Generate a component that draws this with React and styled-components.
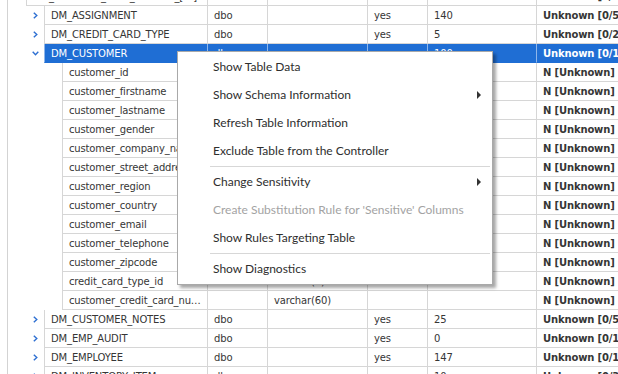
import React from "react";
import styled, { createGlobalStyle, css } from "styled-components";

const Global = createGlobalStyle`
  html, body { margin: 0; padding: 0; background: #fff; overflow: hidden; }
  #root { width: 618px; height: 374px; overflow: hidden; }
`;

const Page = styled.div`
  position: relative;
  width: 618px;
  height: 374px;
  overflow: hidden;
  background: #fff;
`;

const Grid = styled.div`
  margin-top: -13px;
  margin-left: 7px;
  border-left: 1px solid #d3d3d3;
  width: 720px;
  font-family: "DejaVu Sans", Tahoma, sans-serif;
  font-size: 10px;
  letter-spacing: -0.15px;
  color: #363636;
`;

const Row = styled.div`
  display: flex;
  height: 19px;
`;

const Expander = styled.div`
  flex: none;
  width: ${(p) => p.$w}px;
  display: flex;
  align-items: center;
  justify-content: flex-end;
  padding-right: ${(p) => (p.$down ? 5 : 6)}px;
  box-sizing: border-box;
`;

const Cell = styled.div`
  flex: none;
  width: ${(p) => p.$w}px;
  box-sizing: border-box;
  border-left: 1px solid #d6d6d6;
  border-bottom: 1px solid #d6d6d6;
  padding-left: 6px;
  padding-right: 2px;
  line-height: 19px;
  white-space: nowrap;
  overflow: hidden;
  text-overflow: ${(p) => (p.$ellipsis ? "ellipsis" : "clip")};
  font-weight: ${(p) => (p.$bold ? 700 : 400)};
  ${(p) =>
    p.$sel &&
    css`
      background: #1f6ed4;
      color: #fff;
      border-left-color: #8fb6ea;
      border-bottom-color: #1f6ed4;
    `}
`;

const Menu = styled.div`
  position: absolute;
  left: 177px;
  top: 51px;
  width: 316px;
  box-sizing: border-box;
  background: #fff;
  border: 1px solid #a9a9a9;
  box-shadow: 3px 3px 3px rgba(0, 0, 0, 0.35);
  padding: 1px 0 1px;
  font-family: Lato, "Segoe UI", sans-serif;
  font-size: 12px;
  color: #2e2e2e;
`;

const Item = styled.div`
  position: relative;
  height: 28px;
  line-height: 28px;
  padding-left: 35px;
  color: ${(p) => (p.$disabled ? "#a3a3a3" : "#2e2e2e")};
`;

const Arrow = styled.span`
  position: absolute;
  right: 11px;
  top: 10px;
  width: 0;
  height: 0;
  border-top: 4px solid transparent;
  border-bottom: 4px solid transparent;
  border-left: 4px solid #333;
`;

const Sep = styled.div`
  height: 1px;
  background: #d7d7d7;
  margin: 1px 2px 1px 32px;
`;

const Chevron = ({ down }) =>
  down ? (
    <svg width="7" height="5" viewBox="0 0 7 5">
      <polyline points="0.7,0.8 3.5,3.8 6.3,0.8" fill="none" stroke="#2d6fd2" strokeWidth="1.4" />
    </svg>
  ) : (
    <svg width="5" height="7" viewBox="0 0 5 7">
      <polyline points="0.8,0.7 3.8,3.5 0.8,6.3" fill="none" stroke="#2d6fd2" strokeWidth="1.4" />
    </svg>
  );

const COLS = [60, 100, 60, 109, 220];

const TableRow = ({ name, schema, yes, count, status, sel, down }) => (
  <Row>
    <Expander $w={36} $down={down}>
      <Chevron down={down} />
    </Expander>
    <Cell $w={163} $sel={sel}>{name}</Cell>
    <Cell $w={COLS[0]} $sel={sel}>{schema}</Cell>
    <Cell $w={COLS[1]} $sel={sel}></Cell>
    <Cell $w={COLS[2]} $sel={sel}>{yes}</Cell>
    <Cell $w={COLS[3]} $sel={sel}>{count}</Cell>
    <Cell $w={COLS[4]} $sel={sel} $bold>{status}</Cell>
  </Row>
);

const ColumnRow = ({ name, type }) => (
  <Row>
    <Expander $w={54} />
    <Cell $w={145} $ellipsis>{name}</Cell>
    <Cell $w={COLS[0]}></Cell>
    <Cell $w={COLS[1]}>{type}</Cell>
    <Cell $w={COLS[2]}></Cell>
    <Cell $w={COLS[3]}></Cell>
    <Cell $w={COLS[4]} $bold>N [Unknown]</Cell>
  </Row>
);

const columns = [
  ["customer_id", "int"],
  ["customer_firstname", "varchar(40)"],
  ["customer_lastname", "varchar(40)"],
  ["customer_gender", "char(1)"],
  ["customer_company_name", "varchar(60)"],
  ["customer_street_address", "varchar(60)"],
  ["customer_region", "varchar(40)"],
  ["customer_country", "varchar(40)"],
  ["customer_email", "varchar(60)"],
  ["customer_telephone", "varchar(20)"],
  ["customer_zipcode", "varchar(10)"],
  ["credit_card_type_id", "varchar(5)"],
  ["customer_credit_card_number", "varchar(60)"],
];

export default function App() {
  return (
    <Page>
      <Global />
      <Grid>
        <Row>
          <Expander $w={18} />
          <Cell $w={181}>DM_ADDRESS_TYPE_LOOKUP_[ID]</Cell>
          <Cell $w={COLS[0]}></Cell>
          <Cell $w={COLS[1]}></Cell>
          <Cell $w={COLS[2]}></Cell>
          <Cell $w={COLS[3]}></Cell>
          <Cell $w={COLS[4]} $bold>Unknown [0/4]</Cell>
        </Row>
        <TableRow name="DM_ASSIGNMENT" schema="dbo" yes="yes" count="140" status="Unknown [0/5]" />
        <TableRow name="DM_CREDIT_CARD_TYPE" schema="dbo" yes="yes" count="5" status="Unknown [0/2]" />
        <TableRow name="DM_CUSTOMER" schema="dbo" yes="yes" count="100" status="Unknown [0/13]" sel down />
        {columns.map(([n, t]) => (
          <ColumnRow key={n} name={n} type={t} />
        ))}
        <TableRow name="DM_CUSTOMER_NOTES" schema="dbo" yes="yes" count="25" status="Unknown [0/5]" />
        <TableRow name="DM_EMP_AUDIT" schema="dbo" yes="yes" count="0" status="Unknown [0/1]" />
        <TableRow name="DM_EMPLOYEE" schema="dbo" yes="yes" count="147" status="Unknown [0/1]" />
        <TableRow name="DM_INVENTORY_ITEM" schema="dbo" yes="yes" count="10" status="Unknown [0/3]" />
      </Grid>
      <Menu>
        <Item>Show Table Data</Item>
        <Item>
          Show Schema Information
          <Arrow />
        </Item>
        <Item>Refresh Table Information</Item>
        <Item>Exclude Table from the Controller</Item>
        <Sep />
        <Item>
          Change Sensitivity
          <Arrow />
        </Item>
        <Item $disabled>Create Substitution Rule for 'Sensitive' Columns</Item>
        <Item>Show Rules Targeting Table</Item>
        <Sep />
        <Item>Show Diagnostics</Item>
      </Menu>
    </Page>
  );
}
